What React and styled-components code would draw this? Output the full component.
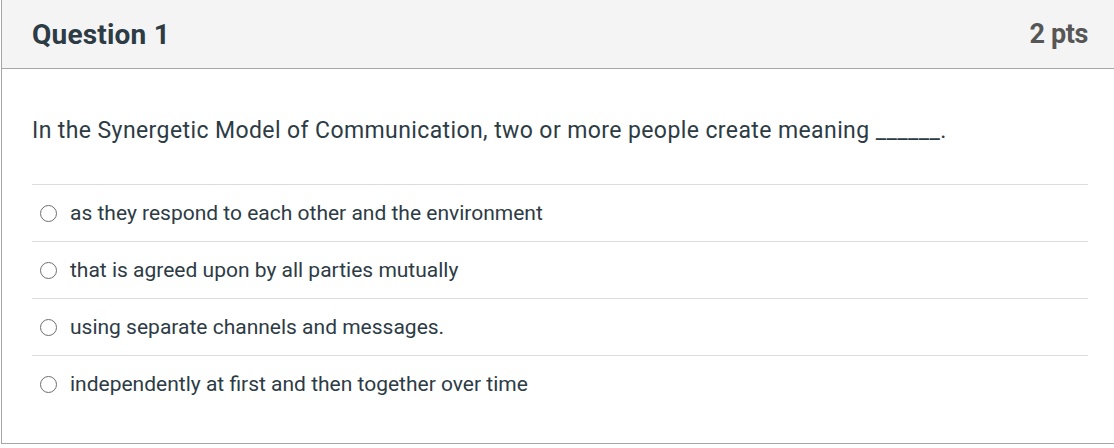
import React from "react";
import styled, { createGlobalStyle } from "styled-components";

const Global = createGlobalStyle`
  html, body { margin: 0; padding: 0; background: #fff; }
  body { font-family: Roboto, "Liberation Sans", Arial, sans-serif; overflow: hidden; }
`;

const Page = styled.div`
  width: 1114px;
  height: 448px;
  padding-left: 1px;
  box-sizing: border-box;
`;

const Card = styled.section`
  border-left: 1px solid #a6a6a6;
  border-bottom: 1px solid #a6a6a6;
  background: #fff;
  padding-bottom: 31px;
`;

const Header = styled.header`
  display: flex;
  align-items: center;
  justify-content: space-between;
  height: 68px;
  padding: 0 26px 0 30px;
  background: #f4f4f4;
  border-bottom: 1px solid #a6a6a6;
`;

const Title = styled.h2`
  margin: 0;
  font-size: 28px;
  font-weight: 700;
  letter-spacing: 0.2px;
  color: #2d3b45;
`;

const Points = styled.span`
  font-size: 27px;
  font-weight: 700;
  letter-spacing: -0.4px;
  color: #565656;
`;

const Body = styled.div`
  padding: 0 26px 0 30px;
`;

const QuestionText = styled.p`
  margin: 0;
  padding: 46px 0 37px;
  font-size: 23px;
  line-height: 32px;
  letter-spacing: 0.4px;
  color: #2d3b45;
`;

const Answers = styled.div`
  display: flex;
  flex-direction: column;
`;

const Answer = styled.label`
  display: flex;
  align-items: center;
  gap: 13px;
  height: 56px;
  padding-left: 8px;
  border-top: 1px solid #dcdcdc;
  font-size: 21px;
  color: #2d3b45;
  cursor: pointer;
`;

const Radio = styled.span`
  width: 17px;
  height: 17px;
  box-sizing: border-box;
  border: 1.5px solid #6e6e6e;
  border-radius: 50%;
  flex: none;
`;

const answers = [
  "as they respond to each other and the environment",
  "that is agreed upon by all parties mutually",
  "using separate channels and messages.",
  "independently at first and then together over time",
];

export default function App() {
  return (
    <>
      <Global />
      <Page>
        <Card>
          <Header>
            <Title>Question 1</Title>
            <Points>2 pts</Points>
          </Header>
          <Body>
            <QuestionText>
              In the Synergetic Model of Communication, two or more people create meaning ______.
            </QuestionText>
            <Answers>
              {answers.map((a) => (
                <Answer key={a}>
                  <Radio />
                  {a}
                </Answer>
              ))}
            </Answers>
          </Body>
        </Card>
      </Page>
    </>
  );
}
